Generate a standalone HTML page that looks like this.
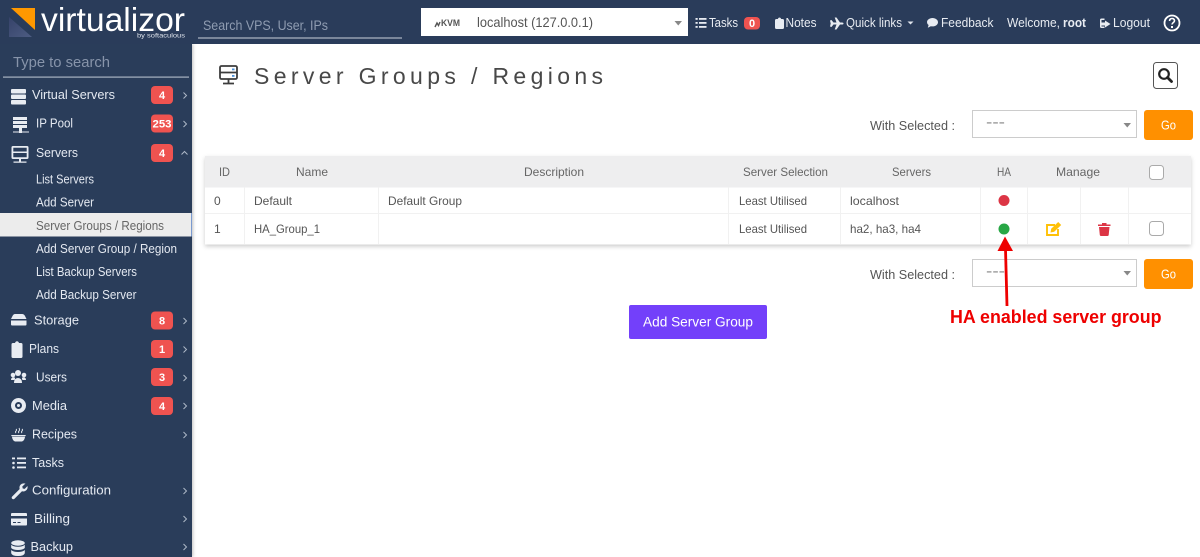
<!DOCTYPE html>
<html lang="en">
<head>
<meta charset="utf-8">
<title>Server Groups / Regions</title>
<style>
html,body{margin:0;padding:0;width:1200px;height:557px;overflow:hidden;background:#fff}
svg{display:block;filter:blur(.35px)}
text{font-family:"Liberation Sans",sans-serif;font-size:12px}
.s{fill:#e4e9f1;font-size:13px}
.m{fill:#e4e9f1;font-size:12.5px}
.h{fill:#e8ecf2;font-size:12.5px}
.b{fill:#fff;font-size:11px;font-weight:bold;text-anchor:middle}
.th{fill:#666;font-size:12px}
.td{fill:#555;font-size:12px}
.chev{fill:none;stroke:#aeb8c7;stroke-width:1}
.ic{fill:#e8ecf2}
.ln{stroke:#f1f1f1;stroke-width:1}
</style>
</head>
<body>
<svg width="1200" height="557" viewBox="0 0 1200 557" xmlns="http://www.w3.org/2000/svg">
<defs>
<linearGradient id="lg" x1="0" y1="0" x2="1" y2="1"><stop offset="0" stop-color="#36436a"/><stop offset="1" stop-color="#4d5c82"/></linearGradient>
<filter id="sh" x="-2%" y="-10%" width="104%" height="125%"><feDropShadow dx="0" dy="2" stdDeviation="2" flood-color="#000" flood-opacity=".2"/></filter>
<filter id="sb" x="-5%" y="-5%" width="110%" height="110%"><feDropShadow dx="1" dy="0" stdDeviation="1.5" flood-color="#000" flood-opacity=".25"/></filter>
</defs>

<rect width="1200" height="557" fill="#fff"/>
<rect x="0" y="44" width="192" height="513" fill="#2a3c5a" filter="url(#sb)"/>
<rect x="0" y="0" width="1200" height="44" fill="#2a3c5a"/>

<!-- logo -->
<polygon points="11,8 35,8 35,30" fill="#ff9800"/>
<polygon points="9,17 32,37 9,37" fill="url(#lg)"/>
<text x="41" y="31" textLength="144" lengthAdjust="spacingAndGlyphs" style="font-size:33px" fill="#fff">virtualizor</text>
<text x="137" y="37.500" textLength="48" lengthAdjust="spacingAndGlyphs" style="font-size:6.5px" fill="#dfe4ec">by softaculous</text>

<!-- top search -->
<text x="203" y="30" textLength="125" lengthAdjust="spacingAndGlyphs" style="font-size:14px" fill="#8f9cb1">Search VPS, User, IPs</text>
<rect x="198" y="37.500" width="204" height="1" fill="#c9d0da"/>

<!-- server select -->
<rect x="421" y="8" width="267" height="28" fill="#fff"/>
<path d="M435 27l2-4 1.500 2.500 1.500-3.500" fill="none" stroke="#555" stroke-width="1.400"/>
<text x="441" y="26" textLength="19" lengthAdjust="spacingAndGlyphs" style="font-size:9px;font-weight:bold" fill="#555">KVM</text>
<text x="477" y="27" textLength="116" lengthAdjust="spacingAndGlyphs" style="font-size:14px" fill="#555">localhost (127.0.0.1)</text>
<polygon points="674.500,21 682,21 678.250,25.500" fill="#888"/>

<!-- top nav -->
<g class="ic">
<rect x="699" y="18" width="7.500" height="1.800"/><rect x="699" y="22" width="7.500" height="1.800"/><rect x="699" y="26" width="7.500" height="1.800"/>
<rect x="695.500" y="18" width="2.200" height="1.800"/><rect x="695.500" y="22" width="2.200" height="1.800"/><rect x="695.500" y="26" width="2.200" height="1.800"/>
</g>
<text class="h" x="709" y="27" textLength="29" lengthAdjust="spacingAndGlyphs">Tasks</text>
<rect x="744" y="17" width="16" height="12.500" rx="4" fill="#ef5350"/>
<text class="b" x="752" y="27">0</text>
<path class="ic" d="M775 20.500q0-1.500 1.500-1.500h1.300q.5-1.500 1.700-1.500t1.700 1.500h1.300q1.500 0 1.500 1.500v7q0 1.500-1.500 1.500h-6q-1.500 0-1.500-1.500z"/>
<text class="h" x="785.500" y="27" textLength="31" lengthAdjust="spacingAndGlyphs">Notes</text>
<path class="ic" d="M830 20.500l1.500-.5 2 2.500h3l-1.800-5h1.800l3.500 5h2q1.500 0 1.500 1t-1.500 1h-2l-3.500 5h-1.800l1.800-5h-3l-2 2.500-1.500-.5.700-3z"/>
<text class="h" x="846" y="27" textLength="56" lengthAdjust="spacingAndGlyphs">Quick links</text>
<polygon points="907.500,21.500 913.500,21.500 910.500,24.500" fill="#dfe4ec"/>
<path class="ic" d="M932.500 18c3 0 5.500 1.800 5.500 4.200s-2.500 4.200-5.500 4.200q-.9 0-1.700-.2l-3 1.500.8-2.700q-1.600-1.200-1.600-2.800c0-2.400 2.500-4.200 5.500-4.200z"/>
<text class="h" x="941" y="27" textLength="52.500" lengthAdjust="spacingAndGlyphs">Feedback</text>
<text class="h" x="1007" y="27" textLength="53" lengthAdjust="spacingAndGlyphs">Welcome,</text>
<text class="h" x="1063" y="27" textLength="23" lengthAdjust="spacingAndGlyphs" style="font-weight:bold">root</text>
<path class="ic" d="M1100 20q0-1.500 1.500-1.500h3v1.500h-3v6.500h3v1.500h-3q-1.500 0-1.500-1.500zM1105 20.500l5.500 3.500-5.500 3.500v-2h-3.500v-3h3.500z"/>
<text class="h" x="1113" y="27" textLength="37" lengthAdjust="spacingAndGlyphs">Logout</text>
<circle cx="1172" cy="23" r="7.500" fill="none" stroke="#fff" stroke-width="1.800"/>
<path d="M1169.500 21q.2-2.500 2.500-2.500t2.500 2.200c0 2-2.500 1.800-2.500 3.800" fill="none" stroke="#fff" stroke-width="1.600"/>
<rect x="1171" y="26" width="2" height="2" fill="#fff"/>

<!-- sidebar search -->
<text x="13" y="67" textLength="97" lengthAdjust="spacingAndGlyphs" style="font-size:15px" fill="#8794aa">Type to search</text>
<rect x="3" y="76.500" width="186" height="1.200" fill="#a9b3c2"/>

<!-- sidebar icons -->
<g class="ic">
<rect x="11" y="89" width="15" height="4.500" rx="1"/><rect x="11" y="94.500" width="15" height="4.500" rx="1"/><rect x="11" y="100" width="15" height="4.500" rx="1"/>
<rect x="13" y="117" width="14" height="3"/><rect x="13" y="121" width="14" height="3"/><rect x="13" y="125" width="14" height="3"/><rect x="13" y="131.500" width="16" height="1"/><rect x="19" y="128" width="3" height="5"/>
<path d="M13 146h14a1.500 1.500 0 0 1 1.500 1.500v10a1.500 1.500 0 0 1-1.500 1.500H13a1.500 1.500 0 0 1-1.500-1.500v-10a1.500 1.500 0 0 1 1.500-1.500zm.3 1.800v3.700h13.400v-3.700zm0 5.200v4.200h13.400V153zM19 159h2v2.500h5.500v1.200H13.500v-1.200H19z" fill-rule="evenodd"/>
<path d="M15 314h7q2 0 3 2l1.500 3H11l1.500-3q1-2 2.500-2zM11 320.500h15.500v4q0 1-1 1H12q-1 0-1-1z"/>
<path d="M12 343q0-1.500 1.500-1.500h2q.5-1.800 2-1.800t2 1.800h2q1.500 0 1.500 1.500v12q0 1.500-1.500 1.500h-8q-1.500 0-1.500-1.500z" transform="translate(-.5 1.500)"/>
<circle cx="18" cy="373" r="3"/><circle cx="13" cy="375" r="2.300"/><circle cx="24" cy="375" r="2.300"/>
<path d="M14 383q0-5 4-5t4 5zM11 380q0-2.800 2.500-2.800t1 2.800zM26 380q0-2.800-2.500-2.800t-1 2.800z"/>
<path d="M18.500 398a7.500 7.500 0 1 0 .01 0zm0 4a3.500 3.500 0 1 1-.01 0z" fill-rule="evenodd"/>
<circle cx="18.500" cy="405.500" r="1.500"/>
<path d="M11 435h15l-1 1.500h-13zM12 437h13q-.5 3.500-3 4.500h-7q-2.500-1-3-4.500z"/>
<path d="M16 433q-1-1 0-2t0-2M19 433q-1-1 0-2t0-3M22 433q-1-1 0-2t0-2" fill="none" stroke="#e8ecf2" stroke-width=".9"/>
<rect x="17" y="457.500" width="9" height="1.800"/><rect x="17" y="462" width="9" height="1.800"/><rect x="17" y="466.500" width="9" height="1.800"/>
<rect x="12" y="457.500" width="3" height="1.800"/><circle cx="13.500" cy="463" r="1.300"/><circle cx="13.500" cy="467.500" r="1.300"/>
<path d="M25.500 483.500l-3.200 3 .4 2 2 .4 2.800-2.900q.5 3-1.500 4.500t-4 .8l-7.500 7.500q-1.200 1-2.300 0t0-2.300l7.500-7.500q-.8-2.500.8-4.300t4.500-1.200z"/>
<path d="M12 513h14a1 1 0 0 1 1 1v2H11v-2a1 1 0 0 1 1-1zM11 518.500h16v6a1 1 0 0 1-1 1H12a1 1 0 0 1-1-1zm2 3.500v1h3v-1zm4.500 0v1h3v-1z" fill-rule="evenodd"/>
<ellipse cx="18" cy="543" rx="6.800" ry="2.700"/>
<path d="M11.200 544.800q2 2 6.800 2t6.800-2v3.200q-2 2-6.800 2t-6.800-2zM11.200 550q2 2 6.800 2t6.800-2v3.200q-1 2.800-6.800 2.800t-6.800-2.800z"/>
</g>

<!-- sidebar labels -->
<text class="s" x="32" y="99" textLength="83" lengthAdjust="spacingAndGlyphs">Virtual Servers</text>
<text class="s" x="36" y="127.500" textLength="37" lengthAdjust="spacingAndGlyphs">IP Pool</text>
<text class="s" x="36" y="157" textLength="42" lengthAdjust="spacingAndGlyphs">Servers</text>
<text class="m" x="36" y="183.500" textLength="58" lengthAdjust="spacingAndGlyphs">List Servers</text>
<text class="m" x="36" y="206.500" textLength="58" lengthAdjust="spacingAndGlyphs">Add Server</text>
<rect x="0" y="213" width="192" height="23.500" fill="#ececec"/>
<rect x="191" y="213" width="1" height="23.500" fill="#7a9ad0"/>
<text x="36" y="230" textLength="128" lengthAdjust="spacingAndGlyphs" style="font-size:12.5px" fill="#666">Server Groups / Regions</text>
<text class="m" x="36" y="253" textLength="141" lengthAdjust="spacingAndGlyphs">Add Server Group / Region</text>
<text class="m" x="36" y="276" textLength="101" lengthAdjust="spacingAndGlyphs">List Backup Servers</text>
<text class="m" x="36" y="299" textLength="100.500" lengthAdjust="spacingAndGlyphs">Add Backup Server</text>
<text class="s" x="34" y="324.500" textLength="45" lengthAdjust="spacingAndGlyphs">Storage</text>
<text class="s" x="29" y="353" textLength="30" lengthAdjust="spacingAndGlyphs">Plans</text>
<text class="s" x="36" y="381.500" textLength="31" lengthAdjust="spacingAndGlyphs">Users</text>
<text class="s" x="32" y="410" textLength="35" lengthAdjust="spacingAndGlyphs">Media</text>
<text class="s" x="32" y="438.500" textLength="45" lengthAdjust="spacingAndGlyphs">Recipes</text>
<text class="s" x="32" y="467" textLength="32" lengthAdjust="spacingAndGlyphs">Tasks</text>
<text class="s" x="32" y="494.500" textLength="79" lengthAdjust="spacingAndGlyphs">Configuration</text>
<text class="s" x="34" y="523" textLength="36" lengthAdjust="spacingAndGlyphs">Billing</text>
<text class="s" x="30.500" y="551" textLength="42.500" lengthAdjust="spacingAndGlyphs">Backup</text>

<!-- badges -->
<g fill="#ef5350">
<rect x="151" y="86" width="22" height="18" rx="4"/><rect x="151" y="114.500" width="22" height="18" rx="4"/><rect x="151" y="144" width="22" height="18" rx="4"/>
<rect x="151" y="311.500" width="22" height="18" rx="4"/><rect x="151" y="340" width="22" height="18" rx="4"/><rect x="151" y="368" width="22" height="18" rx="4"/><rect x="151" y="397" width="22" height="18" rx="4"/>
</g>
<text class="b" x="162" y="99">4</text>
<text class="b" x="162" y="127.500" textLength="19" lengthAdjust="spacingAndGlyphs">253</text>
<text class="b" x="162" y="157">4</text>
<text class="b" x="162" y="324.500">8</text>
<text class="b" x="162" y="353">1</text>
<text class="b" x="162" y="381">3</text>
<text class="b" x="162" y="410">4</text>

<!-- chevrons -->
<g class="chev">
<path d="M183.500 92.500l3 3-3 3"/><path d="M183.500 121l3 3-3 3"/><path d="M181.500 154.500l3-3 3 3"/>
<path d="M183.500 318l3 3-3 3"/><path d="M183.500 346.500l3 3-3 3"/><path d="M183.500 375l3 3-3 3"/><path d="M183.500 403l3 3-3 3"/>
<path d="M183.500 432l3 3-3 3"/><path d="M183.500 488l3 3-3 3"/><path d="M183.500 516l3 3-3 3"/><path d="M183.500 544l3 3-3 3"/>
</g>

<!-- page title -->
<g fill="none" stroke="#3c3c3c" stroke-width="1.800">
<rect x="220" y="66" width="17" height="13" rx="1.500"/><path d="M220 72.500h17M228.500 79v4M223 83.500h11"/>
</g>
<rect x="232" y="68.500" width="2.500" height="1.800" fill="#4a90d9"/><rect x="232" y="75" width="2.500" height="1.800" fill="#4a90d9"/>
<text x="254" y="84" textLength="349" style="font-size:23px" fill="#484848">Server Groups / Regions</text>

<!-- search button -->
<rect x="1153.500" y="62.500" width="24" height="26" rx="3" fill="#fff" stroke="#555"/>
<circle cx="1164" cy="74" r="4.800" fill="none" stroke="#222" stroke-width="2.200"/>
<path d="M1167.500 77.500l4 4" stroke="#222" stroke-width="2.800" stroke-linecap="round"/>

<!-- top bulk -->
<text x="870" y="130" textLength="85" lengthAdjust="spacingAndGlyphs" style="font-size:13px" fill="#555">With Selected :</text>
<rect x="972.500" y="110.500" width="164" height="27" fill="#fff" stroke="#ccc"/>
<text x="986" y="127" textLength="19" lengthAdjust="spacingAndGlyphs" style="font-size:15px" fill="#888">---</text>
<polygon points="1123.500,123 1131,123 1127.250,127.500" fill="#888"/>
<rect x="1144" y="110" width="49" height="30" rx="3" fill="#ff9000"/>
<text x="1161" y="129.500" textLength="15" lengthAdjust="spacingAndGlyphs" style="font-size:13px" fill="#fff">Go</text>

<!-- table -->
<rect x="205" y="156" width="986" height="88.500" fill="#fff" filter="url(#sh)"/>
<rect x="205" y="156" width="986" height="31.500" fill="#eeeeef"/>
<g class="ln">
<path d="M205 213.500h986"/>
<path d="M244.500 187v57M378.500 187v57M728.500 187v57M840.500 187v57M980.500 187v57M1027.500 187v57M1080.500 187v57M1128.500 187v57"/>
</g>
<text class="th" x="219" y="176" textLength="11" lengthAdjust="spacingAndGlyphs">ID</text>
<text class="th" x="296" y="176" textLength="32" lengthAdjust="spacingAndGlyphs">Name</text>
<text class="th" x="524" y="176" textLength="60" lengthAdjust="spacingAndGlyphs">Description</text>
<text class="th" x="743" y="176" textLength="85" lengthAdjust="spacingAndGlyphs">Server Selection</text>
<text class="th" x="892" y="176" textLength="39" lengthAdjust="spacingAndGlyphs">Servers</text>
<text class="th" x="997" y="176" textLength="14" lengthAdjust="spacingAndGlyphs">HA</text>
<text class="th" x="1056" y="176" textLength="44" lengthAdjust="spacingAndGlyphs">Manage</text>
<rect x="1149.500" y="165.500" width="14" height="14" rx="3" fill="#fff" stroke="#aaa"/>

<text class="td" x="214" y="205">0</text>
<text class="td" x="254" y="205" textLength="38" lengthAdjust="spacingAndGlyphs">Default</text>
<text class="td" x="388" y="205" textLength="74" lengthAdjust="spacingAndGlyphs">Default Group</text>
<text class="td" x="739" y="205" textLength="68" lengthAdjust="spacingAndGlyphs">Least Utilised</text>
<text class="td" x="850" y="205" textLength="49" lengthAdjust="spacingAndGlyphs">localhost</text>
<circle cx="1004" cy="200.500" r="5.500" fill="#dc3545"/>

<text class="td" x="214" y="233">1</text>
<text class="td" x="254" y="233" textLength="66" lengthAdjust="spacingAndGlyphs">HA_Group_1</text>
<text class="td" x="739" y="233" textLength="68" lengthAdjust="spacingAndGlyphs">Least Utilised</text>
<text class="td" x="850" y="233" textLength="71" lengthAdjust="spacingAndGlyphs">ha2, ha3, ha4</text>
<circle cx="1004" cy="229" r="5.500" fill="#28a745"/>
<path d="M1058 229v6h-11v-10h8" fill="none" stroke="#ffc107" stroke-width="1.900"/>
<path d="M1050.500 232.500l.7-3.700 7-6.800 3 3-7 6.800z" fill="#ffc107"/>
<path d="M1098 224.500h12.500v1.500H1098zM1102 223h4.500v1.500H1102zM1099 227h10.500l-.8 8q-.1 1-1.200 1h-6.500q-1.100 0-1.200-1z" fill="#dc3545"/>
<rect x="1149.500" y="221.500" width="14" height="14" rx="3" fill="#fff" stroke="#aaa"/>

<!-- bottom bulk -->
<text x="870" y="279" textLength="85" lengthAdjust="spacingAndGlyphs" style="font-size:13px" fill="#555">With Selected :</text>
<rect x="972.500" y="259.500" width="164" height="27" fill="#fff" stroke="#ccc"/>
<text x="986" y="276" textLength="19" lengthAdjust="spacingAndGlyphs" style="font-size:15px" fill="#888">---</text>
<polygon points="1123.500,271 1131,271 1127.250,275.500" fill="#888"/>
<rect x="1144" y="259" width="49" height="30" rx="3" fill="#ff9000"/>
<text x="1161" y="278.500" textLength="15" lengthAdjust="spacingAndGlyphs" style="font-size:13px" fill="#fff">Go</text>

<!-- add button -->
<rect x="629" y="305" width="138" height="34" rx="2" fill="#7340fa"/>
<text x="643" y="326.500" textLength="110" lengthAdjust="spacingAndGlyphs" style="font-size:13.5px" fill="#fff">Add Server Group</text>

<!-- annotation -->
<path d="M1007 306L1005.500 249" stroke="#ee0000" stroke-width="2.800" fill="none"/>
<polygon points="1005,236.500 1013,251 997.500,251" fill="#ee0000"/>
<text x="950" y="323" textLength="211.500" lengthAdjust="spacingAndGlyphs" style="font-size:18px;font-weight:bold" fill="#ee0000">HA enabled server group</text>
</svg>
</body>
</html>
